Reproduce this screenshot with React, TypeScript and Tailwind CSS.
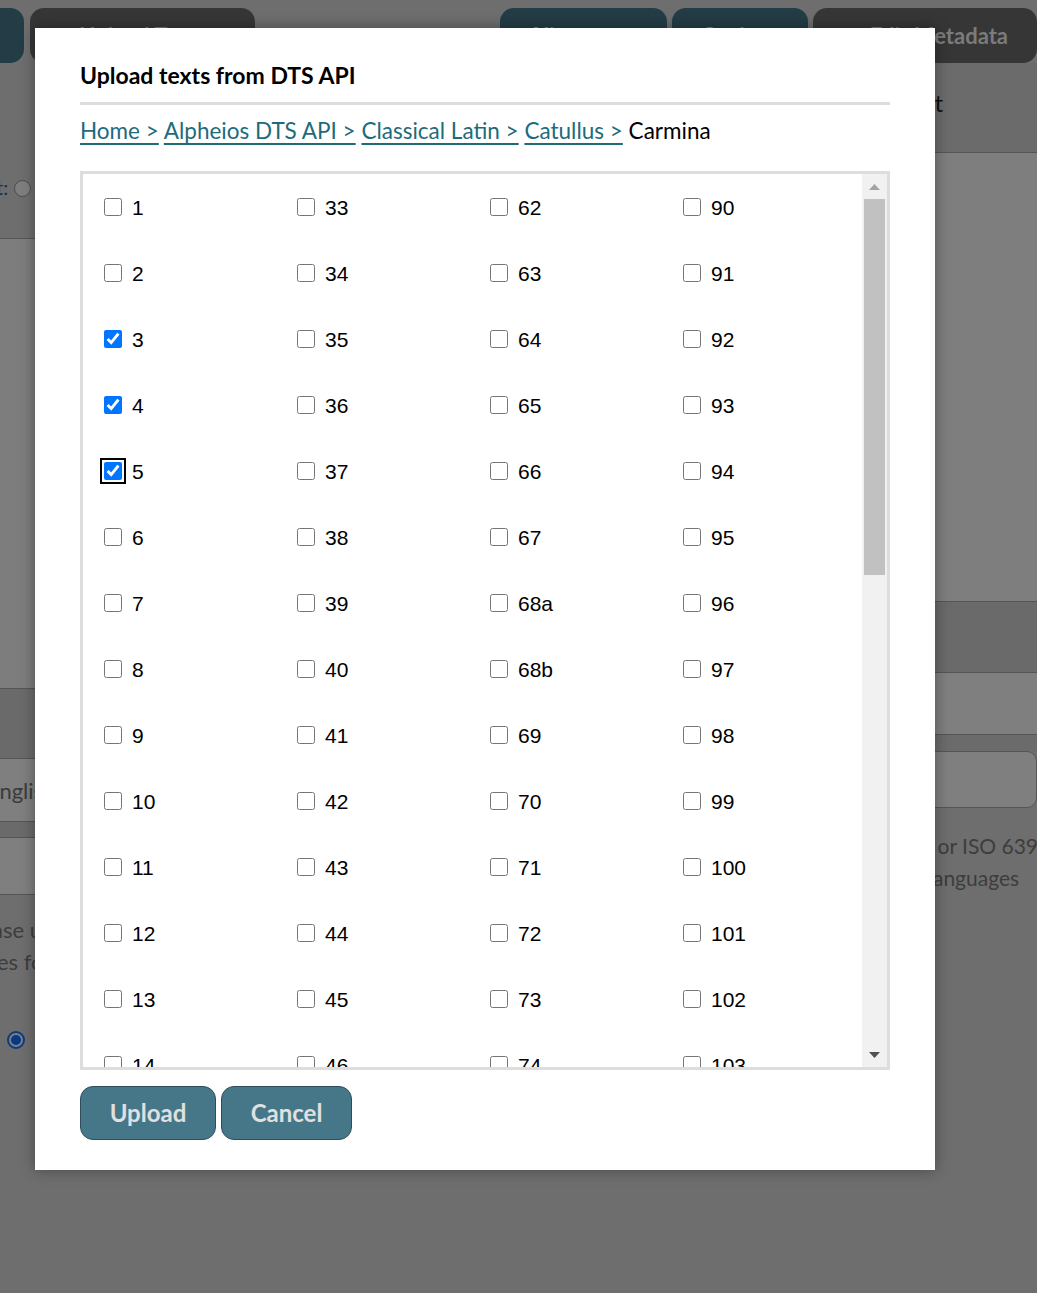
import React from "react";

const range = (a: number, b: number) => {
  const r: string[] = [];
  for (let i = a; i <= b; i++) r.push(String(i));
  return r;
};

const columns: string[][] = [
  range(1, 32),
  range(33, 61),
  [...range(62, 67), "68a", "68b", ...range(69, 89)],
  range(90, 116),
];

const checkedSet = new Set(["3", "4", "5"]);

function Item({ label }: { label: string }) {
  const checked = checkedSet.has(label);
  const focused = label === "5";
  return (
    <label className="flex h-[66px] shrink-0 items-center gap-[10px]">
      <input
        type="checkbox"
        defaultChecked={checked}
        className={
          "m-0 h-[18px] w-[18px] shrink-0 accent-[#0075ff]" +
          (focused ? " rounded-[3px] outline-2 outline-offset-[2px] outline-black" : "")
        }
      />
      <span className="font-['Liberation_Sans',Arial,sans-serif] text-[21px] leading-none text-black">
        {label}
      </span>
    </label>
  );
}

function Crumb({ children }: { children: React.ReactNode }) {
  return (
    <a href="#" className="text-[#1d6b7b] underline decoration-[1.5px] underline-offset-[4px]">
      {children}
    </a>
  );
}

export default function App() {
  return (
    <div className="relative h-[1293px] w-full overflow-hidden bg-[#6e6e6e] font-['Lato',sans-serif]">
      {/* dimmed page behind the dialog */}
      <div className="flex flex-col">
        <nav className="flex h-[63px] items-start pt-2">
          <div className="ml-[-20px] h-[55px] w-[44px] shrink-0 rounded-[14px] bg-[#233c46]" />
          <div className="ml-[6px] flex h-[55px] w-[225px] shrink-0 items-center justify-center rounded-[14px] bg-[#363636] text-[22px] font-bold text-[#777]">
            Upload Texts
          </div>
          <div className="ml-[245px] flex h-[55px] w-[167px] shrink-0 items-center justify-center rounded-[14px] bg-[#233c46] text-[22px] font-bold text-[#7a8a90]">
            Alignments
          </div>
          <div className="ml-[5px] flex h-[55px] w-[136px] shrink-0 items-center justify-center rounded-[14px] bg-[#233c46] text-[22px] font-bold text-[#7a8a90]">
            Options
          </div>
          <div className="ml-[5px] flex h-[55px] w-[224px] shrink-0 items-center justify-end rounded-[14px] bg-[#363636] pr-[29px] text-[22px] font-bold text-[#7b7b7b]">
            Edit Metadata
          </div>
        </nav>
        <div className="flex">
          {/* left column */}
          <div className="flex w-[500px] shrink-0 flex-col overflow-hidden">
            <div className="relative flex h-[175px] items-end pb-[41px]">
              <span className="ml-[-4px] text-[20px] leading-none text-[#1c2c52]">t:</span>
              <span className="ml-[6px] h-[17px] w-[17px] rounded-full border border-[#4a4a4a] bg-[#7f7f7f]" />
            </div>
            <div className="h-[450px] border-t border-[#555] bg-[#7d7d7d]" />
            <div className="h-[70px] border-t border-[#555] bg-[#6a6a6a]" />
            <div className="flex h-[63px] items-center border-t border-[#555] bg-[#7f7f7f]">
              <span className="ml-[-13px] text-[22px] text-[#3b3b3b]">English</span>
            </div>
            <div className="h-[16px] border-t border-[#555] bg-[#6a6a6a]" />
            <div className="h-[57px] border-t border-[#555] bg-[#7f7f7f]" />
            <div className="flex flex-col border-t border-[#555] pt-[19px] text-[22px] leading-[32px] text-[#3d3d3d]">
              <span className="ml-[-8px]">ase use</span>
              <span className="ml-[-3px]">es for</span>
              <span className="ml-[7px] mt-[53px] flex h-[18px] w-[18px] items-center justify-center rounded-full border-2 border-[#0a3c80] bg-[#7f7f7f]">
                <span className="h-[10px] w-[10px] rounded-full bg-[#063a85]" />
              </span>
            </div>
          </div>
          {/* right column */}
          <div className="flex min-w-0 flex-1 flex-col overflow-hidden">
            <div className="flex h-[89px] items-center justify-end bg-[#6b6b6b] pb-[10px] pr-[94px] text-[24px] text-[#111]">
              Upload text
            </div>
            <div className="h-[449px] border-t border-[#555] bg-[#7e7e7e]" />
            <div className="h-[71px] border-t border-[#555] bg-[#6a6a6a]" />
            <div className="h-[62px] border-t border-[#555] bg-[#7f7f7f]" />
            <div className="h-[17px] border-t border-[#555] bg-[#6b6b6b]" />
            <div className="h-[57px] rounded-[10px] border border-[#555] bg-[#7f7f7f]" />
            <div className="flex flex-col whitespace-nowrap pt-[22px] text-[21px] leading-[32px] text-[#3d3d3d]">
              <span className="pl-[420px]">3 or ISO 639-3 codes</span>
              <span className="pl-[428px]">languages</span>
            </div>
          </div>
        </div>
      </div>

      {/* dialog */}
      <div className="absolute left-[35px] top-[28px] flex h-[1142px] w-[900px] flex-col bg-white px-[45px] pt-[33px] shadow-[0_0_14px_rgba(0,0,0,0.35)]">
        <h2 className="h-[28px] text-[23px] font-bold leading-[28px] text-black">Upload texts from DTS API</h2>
        <div className="mt-[13px] h-[3px] w-full bg-[#dddddd]" />
        <div className="mt-[10px] h-[32px] whitespace-nowrap text-[22.5px] leading-[32px] text-black">
          <Crumb>Home &gt;</Crumb> <Crumb>Alpheios DTS API &gt;</Crumb> <Crumb>Classical Latin &gt;</Crumb>{" "}
          <Crumb>Catullus &gt;</Crumb> <span>Carmina</span>
        </div>
        <div className="mt-[24px] flex h-[899px] border-[3px] border-[#dddddd]">
          <div className="flex flex-1 overflow-hidden pl-[21px]">
            {columns.map((col, i) => (
              <div key={i} className="flex w-[193px] shrink-0 flex-col">
                {col.map((l) => (
                  <Item key={l} label={l} />
                ))}
              </div>
            ))}
          </div>
          <div className="flex w-[25px] shrink-0 flex-col bg-[#f1f1f1]">
            <div className="flex h-[25px] items-center justify-center">
              <svg width="11" height="6" viewBox="0 0 11 6">
                <polygon points="5.5,0 11,6 0,6" fill="#a3a3a3" />
              </svg>
            </div>
            <div className="mx-[2px] h-[376px] bg-[#c1c1c1]" />
            <div className="flex-1" />
            <div className="flex h-[25px] items-center justify-center">
              <svg width="11" height="6" viewBox="0 0 11 6">
                <polygon points="0,0 11,0 5.5,6" fill="#505050" />
              </svg>
            </div>
          </div>
        </div>
        <div className="mt-[16px] flex gap-[5px]">
          <button className="h-[54px] w-[136px] rounded-[13px] border border-[#2e4d59] bg-[#457789] text-[24px] font-bold text-[#e0e0e0]">
            Upload
          </button>
          <button className="h-[54px] w-[131px] rounded-[13px] border border-[#2e4d59] bg-[#457789] text-[24px] font-bold text-[#e0e0e0]">
            Cancel
          </button>
        </div>
      </div>
    </div>
  );
}
